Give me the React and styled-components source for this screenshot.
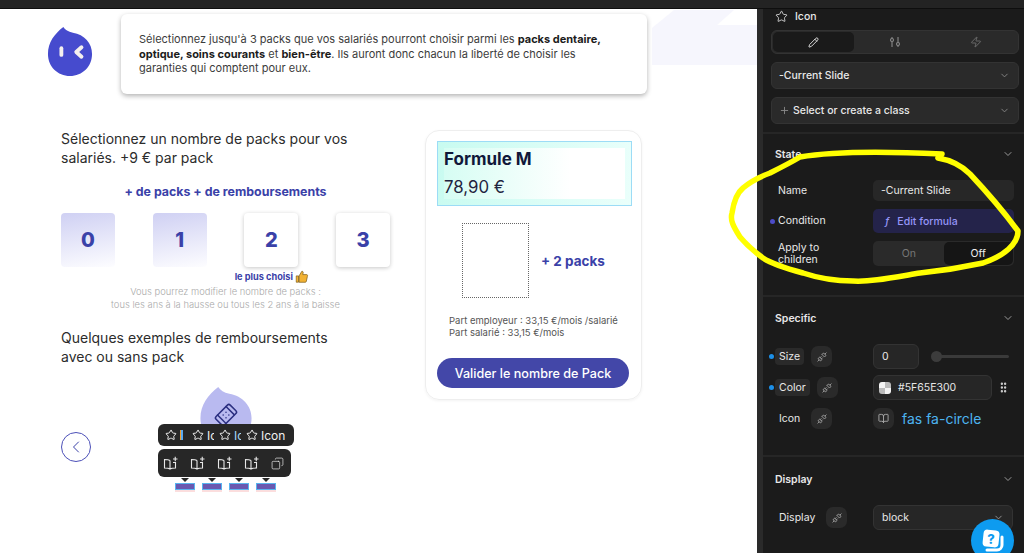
import React from 'react'
import styled, { createGlobalStyle } from 'styled-components'
import { Star, Pencil, Zap, ChevronDown, ChevronLeft, Plus, Unplug, BookOpen, Copy, GripVertical, Bandage } from 'lucide-react'

const BLOB = 'M17 1C19 4 22 6 27 7C39 9 47 18 47 29C47 42 37 52 24 52C11 52 1 42 1 29C1 17 8 8 17 1Z'

const BookAdd = () => (
    <svg width="15" height="15" viewBox="0 0 15 15" fill="none" stroke="#e8e8e8" strokeWidth="1.1">
        <path d="M7 4.500C5.500 3.500 3.500 3.500 1.500 3.500V12C3.500 12 5.500 12 7 13C8.500 12 10.500 12 12.500 12V6.500H10M7 4.500V13" />
        <path d="M10 3h4.500M12.250.8v4.500" />
    </svg>
)

const Sliders = () => (
    <svg width="12" height="12" viewBox="0 0 12 12" fill="none" stroke="#8a8a8a" strokeWidth="1.1">
        <circle cx="3" cy="4" r="1.500" />
        <path d="M3 1v1.500M3 5.500V11" />
        <circle cx="9" cy="8" r="1.500" />
        <path d="M9 1v5.500M9 9.500V11" />
    </svg>
)

const Thumb = () => (
    <svg width="13" height="13" viewBox="0 0 11 11">
        <path d="M.7 5h2v5.300h-2zM3.200 5L5.400 1.200C6.400.9 6.900 1.700 6.600 2.700L6.300 3.900H9.600C10.500 4 10.600 5 10.200 5.500L9.300 9.700C9.100 10.200 8.800 10.400 8.300 10.400H3.200Z" fill="#f2b233" stroke="#7a5a1c" strokeWidth=".6" />
    </svg>
)

const Scribble = () => (
    <ScribbleSvg viewBox="0 0 1024 553">
        <path
            d="M800 157C840 150 900 152 942 154L938 158C950 160 962 166 970 174C985 190 1004 212 1018 231C1018 244 1004 256 983 263C960 268 940 271 920 273C890 278 870 282 853 281C835 281 815 277 803 273C785 268 772 264 763 258C752 250 745 243 740 237C733 226 730 220 732 213C734 200 738 192 743 188C752 180 762 176 770 173C780 168 790 163 800 157Z"
            fill="none"
            stroke="#ffff00"
            strokeWidth="5.500"
            strokeLinejoin="round"
        />
    </ScribbleSvg>
)

const tiles = [
    { value: 0, selected: true },
    { value: 1, selected: true },
    { value: 2, selected: false, note: true },
    { value: 3, selected: false },
]

const App = () => {
    return (
        <Page>
            <GlobalStyle />
            <TopBar />
            <Workspace>
                <Canvas>
                    <Backdrop viewBox="0 0 105 55">
                        <path d="M0 18L22 0H82L65 15H105V55H0Z" fill="#f6f6fd" />
                    </Backdrop>
                    <Intro>
                        <LogoWrap>
                            <svg width="46" height="52" viewBox="0 0 48 54">
                                <path d={BLOB} fill="#464bce" />
                                <rect x="13" y="21" width="4" height="11" rx="2" fill="#f4f0ee" />
                                <path d="M36 22L30.500 27L36 32" fill="none" stroke="#f4f0ee" strokeWidth="4" strokeLinejoin="round" strokeLinecap="round" />
                            </svg>
                        </LogoWrap>
                        <InfoCard>
                            Sélectionnez jusqu'à 3 packs que vos salariés pourront choisir parmi les <b>packs dentaire, optique, soins courants</b> et <b>bien-être</b>. Ils auront donc chacun la liberté de choisir les garanties qui comptent pour eux.
                        </InfoCard>
                    </Intro>
                    <Columns>
                        <LeftColumn>
                            <Heading>Sélectionnez un nombre de packs pour vos salariés. +9 € par pack</Heading>
                            <Tagline>+ de packs + de remboursements</Tagline>
                            <TileRow>
                                {tiles.map((t) => (
                                    <TileCell key={t.value}>
                                        <Tile $selected={t.selected}>{t.value}</Tile>
                                        {t.note && <Popular>le plus choisi <Thumb /></Popular>}
                                    </TileCell>
                                ))}
                            </TileRow>
                            <Hint>
                                Vous pourrez modifier le nombre de packs :<br />
                                tous les ans à la hausse ou tous les 2 ans à la baisse
                            </Hint>
                            <SubHeading>Quelques exemples de remboursements avec ou sans pack</SubHeading>
                            <Stage>
                                <BackButton><ChevronLeft size={20} strokeWidth={1.2} /></BackButton>
                                <StageBlob>
                                    <svg width="54" height="60" viewBox="0 0 48 54">
                                        <path d={BLOB} fill="#b9baf0" />
                                    </svg>
                                    <BlobIcon><Bandage size={24} strokeWidth={1.5} /></BlobIcon>
                                </StageBlob>
                                <Toolbars>
                                    <ToolRow>
                                        <ToolItem><Star size={12} /><Clip $color="linear-gradient(90deg,#f0a030 50%,#5aa8f0 50%)" /></ToolItem>
                                        <ToolItem><Star size={12} /><ClipText>Ic</ClipText></ToolItem>
                                        <ToolItem><Star size={12} /><ClipText $blue>Ic</ClipText></ToolItem>
                                        <ToolItem><Star size={12} /><span>Icon</span></ToolItem>
                                    </ToolRow>
                                    <ActionRow>
                                        <BookAdd /><BookAdd /><BookAdd /><BookAdd />
                                        <FlippedCopy><Copy size={13} strokeWidth={1.3} /></FlippedCopy>
                                    </ActionRow>
                                    <Markers>
                                        {[0, 1, 2, 3].map((i) => (
                                            <Marker key={i} />
                                        ))}
                                    </Markers>
                                </Toolbars>
                            </Stage>
                        </LeftColumn>
                        <PriceCard>
                            <PriceBox>
                                <PriceInner>
                                    <PriceName>Formule M</PriceName>
                                    <PriceValue>78,90 €</PriceValue>
                                </PriceInner>
                            </PriceBox>
                            <PackRow>
                                <Dropzone />
                                <PackCount>+ 2 packs</PackCount>
                            </PackRow>
                            <Shares>
                                Part employeur : 33,15 €/mois /salarié<br />
                                Part salarié : 33,15 €/mois
                            </Shares>
                            <Validate>Valider le nombre de Pack</Validate>
                        </PriceCard>
                    </Columns>
                </Canvas>
                <Panel>
                    <PanelHead>
                        <ElementName><Star size={13} strokeWidth={1.5} />Icon</ElementName>
                        <Tabs>
                            <Tab $active><Pencil size={11} /></Tab>
                            <Tab><Sliders /></Tab>
                            <Tab><Zap size={12} strokeWidth={1.3} /></Tab>
                        </Tabs>
                        <SelectBar>-Current Slide<ChevronDown size={11} /></SelectBar>
                        <SelectBar><span><Plus size={11} /> Select or create a class</span><ChevronDown size={11} /></SelectBar>
                    </PanelHead>
                    <Section $height={163}>
                        <SectionTitle>State<ChevronDown size={12} /></SectionTitle>
                        <StateRow>
                            <StateLabel>Name</StateLabel>
                            <Field>-Current Slide</Field>
                        </StateRow>
                        <StateRow>
                            <StateLabel $dot="#4c4cc8">Condition</StateLabel>
                            <FormulaField><i>ƒ</i> Edit formula</FormulaField>
                        </StateRow>
                        <StateRow>
                            <StateLabel>Apply to children</StateLabel>
                            <Toggle>
                                <ToggleOption>On</ToggleOption>
                                <ToggleOption $active>Off</ToggleOption>
                            </Toggle>
                        </StateRow>
                    </Section>
                    <Section $height={160} $pad={14}>
                        <SectionTitle>Specific<ChevronDown size={12} /></SectionTitle>
                        <PropRow>
                            <PropLabel>
                                <Chip $dot>Size</Chip>
                                <PlugButton><Unplug size={10} /></PlugButton>
                            </PropLabel>
                            <NumberField>0</NumberField>
                            <Slider><Knob /></Slider>
                        </PropRow>
                        <PropRow>
                            <PropLabel>
                                <Chip $dot>Color</Chip>
                                <PlugButton><Unplug size={10} /></PlugButton>
                            </PropLabel>
                            <ColorField><Swatch />#5F65E300</ColorField>
                            <GripWrap><GripVertical size={13} strokeWidth={2.4} /></GripWrap>
                        </PropRow>
                        <PropRow>
                            <PropLabel>
                                <Chip>Icon</Chip>
                                <PlugButton><Unplug size={10} /></PlugButton>
                            </PropLabel>
                            <PlugButton><BookOpen size={11} /></PlugButton>
                            <IconName>fas fa-circle</IconName>
                        </PropRow>
                    </Section>
                    <Section $pad={15}>
                        <SectionTitle>Display<ChevronDown size={12} /></SectionTitle>
                        <PropRow>
                            <PropLabel>
                                <Chip>Display</Chip>
                                <PlugButton><Unplug size={10} /></PlugButton>
                            </PropLabel>
                            <DisplaySelect>block<ChevronDown size={11} /></DisplaySelect>
                        </PropRow>
                    </Section>
                    <HelpButton>
                        <svg width="24" height="24" viewBox="0 0 24 24">
                            <path d="M6 21h10a5 5 0 0 0 5-5V8" fill="none" stroke="#fff" strokeWidth="3" strokeLinecap="round" />
                            <rect x="2" y="1" width="16" height="17" rx="4" fill="#fff" transform="rotate(6 10 10)" />
                            <text x="10" y="15" fontSize="13" fontWeight="800" fontFamily="Inter" fill="#0d9bf0" textAnchor="middle">?</text>
                        </svg>
                    </HelpButton>
                </Panel>
            </Workspace>
            <Scribble />
        </Page>
    )
}

export default App


const GlobalStyle = createGlobalStyle`
    html, body {
        margin: 0;
        padding: 0;
    }
    body {
        font-family: Inter, "Liberation Sans", sans-serif;
        overflow: hidden;
    }
`
const Page = styled.div`
    position: relative;
    width: 1024px;
    height: 553px;
    overflow: hidden;
    background: #2a2a2a;
`
const ScribbleSvg = styled.svg`
    position: absolute;
    left: 0;
    top: 0;
    width: 1024px;
    height: 553px;
    pointer-events: none;
`
const TopBar = styled.div`
    height: 8px;
    background: #232323;
    border-bottom: 1px solid #0e0e0e;
`
const Workspace = styled.div`
    display: flex;
    height: 544px;
`
const Canvas = styled.div`
    position: relative;
    width: 757px;
    flex: none;
    background: #fff;
    margin-right: 6px;
    overflow: hidden;
    color: #333;
`
const Backdrop = styled.svg`
    position: absolute;
    right: 0;
    top: 1px;
    width: 105px;
    height: 55px;
`
const Intro = styled.div`
    position: relative;
    display: flex;
    padding: 5px 0 0 47px;
`
const LogoWrap = styled.div`
    width: 74px;
    padding-top: 12px;
    svg {
        display: block;
    }
`
const InfoCard = styled.div`
    width: 526px;
    height: 80px;
    box-sizing: border-box;
    padding: 18px 46px 0 18px;
    background: #fff;
    border-radius: 6px;
    box-shadow: 0 2px 5px rgba(0, 0, 0, 0.3);
    font-size: 11px;
    line-height: 14.500px;
    color: #3c3c3c;
    b {
        font-weight: 700;
        color: #1c1c1c;
    }
`
const Columns = styled.div`
    display: flex;
    padding: 35px 0 0 61px;
`
const LeftColumn = styled.div`
    width: 329px;
    margin-right: 35px;
`
const Heading = styled.h2`
    margin: 0;
    width: 295px;
    font-size: 14px;
    line-height: 19px;
    font-weight: 400;
    color: #2c2c2c;
`
const Tagline = styled.div`
    margin-top: 17px;
    text-align: center;
    font-size: 12.400px;
    line-height: 16px;
    font-weight: 700;
    color: #3a41a8;
`
const TileRow = styled.div`
    display: flex;
    justify-content: space-between;
    margin-top: 13px;
`
const TileCell = styled.div`
    position: relative;
    width: 54px;
`
const Tile = styled.div`
    width: 54px;
    height: 54px;
    display: flex;
    align-items: center;
    justify-content: center;
    border-radius: 4px;
    font-size: 20px;
    font-weight: 800;
    color: #3a41a8;
    background: ${(p) => (p.$selected ? 'linear-gradient(170deg, #cfd0f3, #fdfdff)' : '#fff')};
    box-shadow: ${(p) => (p.$selected ? 'none' : '0 1px 4px rgba(0,0,0,0.22)')};
`
const Popular = styled.div`
    position: absolute;
    top: 57px;
    left: 50%;
    transform: translateX(-50%);
    display: flex;
    align-items: center;
    gap: 2px;
    white-space: nowrap;
    font-size: 9.200px;
    line-height: 11px;
    font-weight: 700;
    color: #3a41a8;
`
const Hint = styled.div`
    margin-top: 18px;
    text-align: center;
    font-size: 9.400px;
    line-height: 13px;
    font-weight: 300;
    color: #aaaaaa;
`
const SubHeading = styled(Heading)`
    margin-top: 18px;
    line-height: 18.500px;
`
const Stage = styled.div`
    position: relative;
    height: 110px;
    display: flex;
    align-items: flex-start;
`
const BackButton = styled.div`
    width: 30px;
    height: 30px;
    box-sizing: border-box;
    margin-top: 66px;
    border: 1px solid #4c50b8;
    border-radius: 50%;
    display: flex;
    align-items: center;
    justify-content: center;
    color: #3a41a8;
`
const StageBlob = styled.div`
    position: relative;
    margin: 20px 0 0 108px;
    svg {
        display: block;
    }
`
const BlobIcon = styled.div`
    position: absolute;
    left: 15px;
    top: 17px;
    color: #2b2f80;
    transform: rotate(-45deg);
`
const Toolbars = styled.div`
    position: absolute;
    left: 97px;
    top: 58px;
    width: 136px;
`
const ToolRow = styled.div`
    display: flex;
    align-items: center;
    height: 22px;
    padding-left: 7px;
    box-sizing: border-box;
    background: #272727;
    border-radius: 6px;
    color: #f0f0f0;
    font-size: 12px;
`
const ToolItem = styled.div`
    display: flex;
    align-items: center;
    gap: 3px;
    width: 27px;
    flex: none;
    overflow: hidden;
    &:last-child {
        width: auto;
    }
`
const Clip = styled.span`
    width: 3px;
    height: 10px;
    background: ${(p) => p.$color};
`
const ClipText = styled.span`
    width: 7px;
    overflow: hidden;
    color: ${(p) => (p.$blue ? '#a8d8f8' : '#f0f0f0')};
`
const ActionRow = styled.div`
    display: flex;
    align-items: center;
    justify-content: space-between;
    width: 133px;
    height: 28px;
    box-sizing: border-box;
    margin-top: 3px;
    padding: 0 7px 0 5px;
    background: #272727;
    border-radius: 6px;
    color: #e8e8e8;
`
const FlippedCopy = styled.div`
    display: flex;
    transform: scaleX(-1);
`
const Markers = styled.div`
    display: flex;
    gap: 7px;
    padding-left: 17px;
    margin-top: 6px;
`
const Marker = styled.div`
    position: relative;
    width: 20px;
    height: 7px;
    box-sizing: border-box;
    background: #6a58b0;
    border: 1px solid #58b4f0;
    box-shadow: 0 2px 0 #fbdede;
    &::before {
        content: '';
        position: absolute;
        left: 5px;
        top: -6px;
        border: 4px solid transparent;
        border-top: 4px solid #272727;
    }
`
const PriceCard = styled.div`
    width: 217px;
    height: 270px;
    box-sizing: border-box;
    margin-top: 1px;
    padding: 10px 11px 0 11px;
    border: 1px solid #eeeeee;
    border-radius: 14px;
    box-shadow: 0 1px 3px rgba(0, 0, 0, 0.05);
`
const PriceBox = styled.div`
    width: 195px;
    height: 65px;
    box-sizing: border-box;
    padding: 6px;
    border: 1px solid #9cdcf6;
    background: linear-gradient(100deg, #c8fbf0, #eafffb);
`
const PriceInner = styled.div`
    height: 51px;
    background: linear-gradient(90deg, #d6fdf3, #fff 70%);
`
const PriceName = styled.div`
    font-size: 17px;
    line-height: 22px;
    font-weight: 700;
    color: #10183a;
`
const PriceValue = styled.div`
    margin-top: 6px;
    font-size: 16.800px;
    line-height: 22px;
    color: #1f2440;
`
const PackRow = styled.div`
    display: flex;
    align-items: center;
    padding: 17px 0 0 25px;
`
const Dropzone = styled.div`
    width: 67px;
    height: 75px;
    box-sizing: border-box;
    border: 1px dotted #666;
`
const PackCount = styled.div`
    margin-left: 12px;
    font-size: 13.500px;
    font-weight: 700;
    color: #3a41a8;
`
const Shares = styled.div`
    margin: 17px 0 0 12px;
    font-size: 9.500px;
    line-height: 12px;
    color: #555;
`
const Validate = styled.div`
    width: 192px;
    height: 30px;
    margin-top: 19px;
    border-radius: 15px;
    background: #4347a8;
    color: #fff;
    font-size: 12.600px;
    font-weight: 500;
    display: flex;
    align-items: center;
    justify-content: center;
`
const Panel = styled.div`
    position: relative;
    flex: 1;
    background: #1b1b1b;
    color: #e8e8e8;
    font-size: 10.500px;
    overflow: hidden;
`
const PanelHead = styled.div`
    padding: 0 5px 0 8px;
    height: 123px;
    border-bottom: 2px solid #262626;
`
const ElementName = styled.div`
    display: flex;
    align-items: center;
    gap: 7px;
    height: 15px;
    margin-bottom: 6px;
    padding-left: 4px;
    font-weight: 500;
`
const Tabs = styled.div`
    display: flex;
    height: 24px;
    box-sizing: border-box;
    padding: 1px;
    background: #2a2a2a;
    border-radius: 6px;
    border: 1px solid #333;
`
const Tab = styled.div`
    flex: 1;
    display: flex;
    align-items: center;
    justify-content: center;
    border-radius: 5px;
    color: ${(p) => (p.$active ? '#e8e8e8' : '#8a8a8a')};
    background: ${(p) => (p.$active ? '#1a1a1a' : 'transparent')};
`
const SelectBar = styled.div`
    display: flex;
    align-items: center;
    justify-content: space-between;
    height: 27px;
    box-sizing: border-box;
    margin-top: 8px;
    padding: 0 8px 0 7px;
    background: #2a2a2a;
    border: 1px solid #333;
    border-radius: 6px;
    font-weight: 500;
    svg:last-child {
        color: #888;
    }
    span {
        display: flex;
        align-items: center;
        gap: 3px;
    }
`
const Section = styled.div`
    height: ${(p) => (p.$height ? `${p.$height}px` : 'auto')};
    box-sizing: border-box;
    padding: ${(p) => p.$pad || 13}px 10px 0 12px;
    border-bottom: ${(p) => (p.$height ? '2px solid #262626' : 'none')};
`
const SectionTitle = styled.div`
    display: flex;
    align-items: center;
    justify-content: space-between;
    height: 14px;
    font-weight: 600;
    margin-bottom: 19px;
    svg {
        color: #999;
    }
`
const StateRow = styled.div`
    display: flex;
    align-items: center;
    margin-bottom: 8px;
    min-height: 21px;
`
const StateLabel = styled.div`
    position: relative;
    width: 70px;
    margin: 0 25px 0 3px;
    line-height: 12px;
    &::before {
        content: '';
        display: ${(p) => (p.$dot ? 'block' : 'none')};
        position: absolute;
        left: -8px;
        top: 3.500px;
        width: 5px;
        height: 5px;
        border-radius: 50%;
        background: ${(p) => p.$dot};
    }
`
const Field = styled.div`
    width: 141px;
    height: 21px;
    box-sizing: border-box;
    display: flex;
    align-items: center;
    padding-left: 8px;
    background: #272727;
    border-radius: 5px;
`
const FormulaField = styled(Field)`
    height: 24px;
    gap: 8px;
    padding-left: 12px;
    background: #24234a;
    color: #9595f8;
    font-weight: 500;
`
const Toggle = styled.div`
    width: 141px;
    height: 25px;
    box-sizing: border-box;
    display: flex;
    padding: 1px;
    background: #2a2a2a;
    border-radius: 5px;
`
const ToggleOption = styled.div`
    flex: 1;
    display: flex;
    align-items: center;
    justify-content: center;
    border-radius: 5px;
    color: ${(p) => (p.$active ? '#f0f0f0' : '#777')};
    background: ${(p) => (p.$active ? '#151515' : 'transparent')};
`
const PropRow = styled.div`
    display: flex;
    align-items: center;
    height: 25px;
    margin-bottom: 6px;
`
const PropLabel = styled.div`
    display: flex;
    align-items: center;
    gap: 7px;
    width: 98px;
    flex: none;
`
const Chip = styled.div`
    position: relative;
    padding: 2px 4px;
    border-radius: 4px;
    background: ${(p) => (p.$dot ? '#2a2a2a' : 'transparent')};
    &::before {
        content: '';
        display: ${(p) => (p.$dot ? 'block' : 'none')};
        position: absolute;
        left: -6px;
        top: 6px;
        width: 5px;
        height: 5px;
        border-radius: 50%;
        background: #1c8fe8;
    }
`
const PlugButton = styled.div`
    width: 21px;
    height: 21px;
    flex: none;
    display: flex;
    align-items: center;
    justify-content: center;
    border-radius: 7px;
    background: #2a2a2a;
    color: #aaa;
`
const NumberField = styled.div`
    width: 46px;
    height: 25px;
    box-sizing: border-box;
    display: flex;
    align-items: center;
    padding-left: 8px;
    background: #262626;
    border: 1px solid #333;
    border-radius: 6px;
`
const Slider = styled.div`
    position: relative;
    width: 72px;
    height: 3px;
    margin-left: 18px;
    background: #3a3a3a;
    border-radius: 2px;
`
const Knob = styled.div`
    position: absolute;
    left: -6px;
    top: -4px;
    width: 11px;
    height: 11px;
    border-radius: 50%;
    background: #3c3c3c;
`
const ColorField = styled(NumberField)`
    width: 119px;
    gap: 7px;
    padding-left: 5px;
`
const Swatch = styled.div`
    width: 12px;
    height: 12px;
    border-radius: 3px;
    background: conic-gradient(#bbb 25%, #f4f4f4 0 50%, #bbb 0 75%, #f4f4f4 0);
`
const GripWrap = styled.div`
    margin-left: 5px;
    display: flex;
    color: #ccc;
`
const IconName = styled.div`
    margin-left: 8px;
    font-size: 14px;
    color: #4db4f0;
`
const DisplaySelect = styled(NumberField)`
    width: 140px;
    justify-content: space-between;
    padding-right: 8px;
    svg {
        color: #999;
    }
`
const HelpButton = styled.div`
    position: absolute;
    left: 208px;
    top: 510px;
    width: 43px;
    height: 43px;
    border-radius: 50%;
    background: #0d9bf0;
    display: flex;
    align-items: center;
    justify-content: center;
`
